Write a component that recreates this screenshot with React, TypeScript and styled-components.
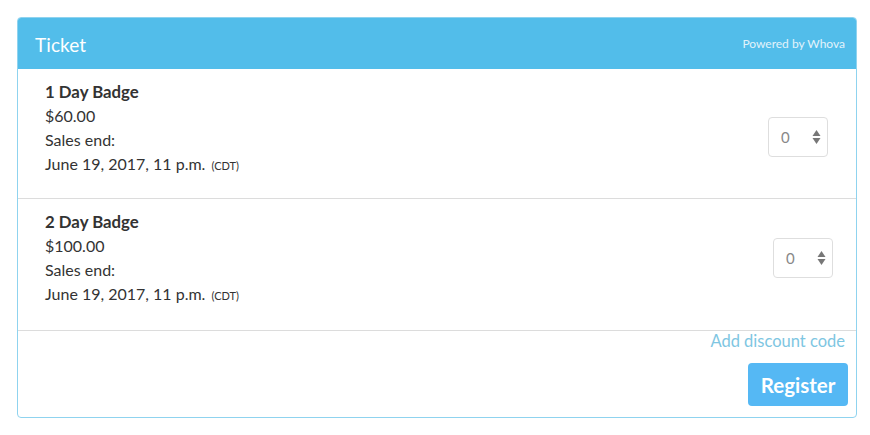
import React from "react";
import styled, { createGlobalStyle } from "styled-components";

const Global = createGlobalStyle`
  html, body { margin: 0; padding: 0; background: #fff; }
  body { font-family: Lato, "Open Sans", "Liberation Sans", sans-serif; color: #333; }
`;

const Page = styled.div`
  padding: 17px 0 0 17px;
`;

const Panel = styled.div`
  width: 840px;
  height: 401px;
  box-sizing: border-box;
  border: 1px solid #8fd3ef;
  border-radius: 4px;
  display: flex;
  flex-direction: column;
  overflow: hidden;
`;

const Header = styled.div`
  height: 51px;
  flex-shrink: 0;
  background: #52bdea;
  display: flex;
  align-items: center;
  justify-content: space-between;
  padding: 0 11px 0 17px;
  box-sizing: border-box;
`;

const Title = styled.span`
  color: #fff;
  font-size: 19px;
  font-weight: 400;
  letter-spacing: 0.1px;
  margin-top: 1px;
`;

const Powered = styled.span`
  color: #e2f3fb;
  font-size: 12px;
`;

const Row = styled.div<{ $height: number }>`
  display: flex;
  justify-content: space-between;
  align-items: flex-start;
  padding: 11px 0 0 27px;
  border-bottom: 1px solid #dcdcdc;
  height: ${(p) => p.$height}px;
  flex-shrink: 0;
  box-sizing: border-box;
`;

const Info = styled.div`
  display: flex;
  flex-direction: column;
  font-size: 16px;
  line-height: 24px;
  color: #333;
`;

const Name = styled.span`
  font-weight: 700;
  font-size: 16.8px;
`;

const Zone = styled.span`
  font-size: 11px;
  margin-left: 2px;
`;

const Qty = styled.div<{ $top: number; $right: number }>`
  margin-top: ${(p) => p.$top}px;
  margin-right: ${(p) => p.$right}px;
  width: 60px;
  height: 40px;
  box-sizing: border-box;
  border: 1px solid #dedede;
  border-radius: 4px;
  display: flex;
  align-items: center;
  justify-content: space-between;
  padding: 0 6px 0 12px;
  color: #888;
  font-size: 15px;
`;

const Footer = styled.div`
  flex: 1;
  display: flex;
  flex-direction: column;
  align-items: flex-end;
  padding: 0 11px 0 0;
`;

const Discount = styled.a`
  color: #7ec6e2;
  font-size: 16.5px;
  line-height: 20px;
  text-decoration: none;
`;

const Register = styled.button`
  margin-top: 12px;
  margin-right: -3px;
  width: 100px;
  height: 43px;
  border: none;
  border-radius: 4px;
  background: #55b8f4;
  color: #fff;
  font-family: Lato, "Open Sans", sans-serif;
  font-weight: 700;
  font-size: 20.5px;
  padding: 0;
`;

const Spin = () => (
  <svg width="9" height="16" viewBox="0 0 9 16">
    <path d="M4.5 1 L8.5 7 H0.5 Z" fill="#777" />
    <path d="M4.5 15 L8.5 9 H0.5 Z" fill="#777" />
  </svg>
);

const tickets = [
  { name: "1 Day Badge", price: "$60.00", top: 37, right: 28, height: 130 },
  { name: "2 Day Badge", price: "$100.00", top: 28, right: 23, height: 132 },
];

export default function App() {
  return (
    <Page>
      <Global />
      <Panel>
        <Header>
          <Title>Ticket</Title>
          <Powered>Powered by Whova</Powered>
        </Header>
        {tickets.map((t) => (
          <Row key={t.name} $height={t.height}>
            <Info>
              <Name>{t.name}</Name>
              <span>{t.price}</span>
              <span>Sales end:</span>
              <span>
                June 19, 2017, 11 p.m. <Zone>(CDT)</Zone>
              </span>
            </Info>
            <Qty $top={t.top} $right={t.right}>
              <span>0</span>
              <Spin />
            </Qty>
          </Row>
        ))}
        <Footer>
          <Discount href="#">Add discount code</Discount>
          <Register>Register</Register>
        </Footer>
      </Panel>
    </Page>
  );
}
